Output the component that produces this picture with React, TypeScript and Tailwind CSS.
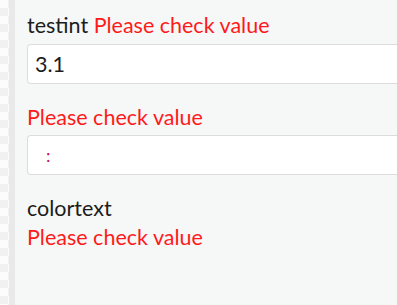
import React from 'react';

const ErrorText: React.FC<{ children: React.ReactNode }> = ({ children }) => (
  <span className="text-[#ff1a1a]">{children}</span>
);

const App: React.FC = () => {
  return (
    <div className="flex h-[305px] w-[397px] overflow-hidden font-['Lato',sans-serif] text-[21.5px] leading-[24px] text-[#1c1c1c]">
      {/* checker strip + edge */}
      <div className="w-[9px] shrink-0 bg-[repeating-conic-gradient(#f1f1f1_0_25%,#fcfcfc_0_50%)] bg-size-[16px_16px]" />
      <div className="w-[6px] shrink-0 bg-[#e9e9e9]" />
      <div className="flex-1 bg-[#f6f7f7] pl-[12px] pt-[13px]">
        <div>
          testint <ErrorText>Please check value</ErrorText>
        </div>
        <div className="mt-[7px] flex h-[40px] items-center rounded-l-[4px] border border-r-0 border-[#dcdcdc] bg-white pl-[7px]">
          3.1
        </div>

        <div className="mt-[21px]">
          <ErrorText>Please check value</ErrorText>
        </div>
        <div className="mt-[6px] flex h-[40px] items-center rounded-l-[4px] border border-r-0 border-[#dcdcdc] bg-white pl-[18px] text-[18px] text-[#c2185b]">
          :
        </div>

        <div className="mt-[21px]">colortext</div>
        <div className="mt-[5px]">
          <ErrorText>Please check value</ErrorText>
        </div>
      </div>
    </div>
  );
};

export default App;
